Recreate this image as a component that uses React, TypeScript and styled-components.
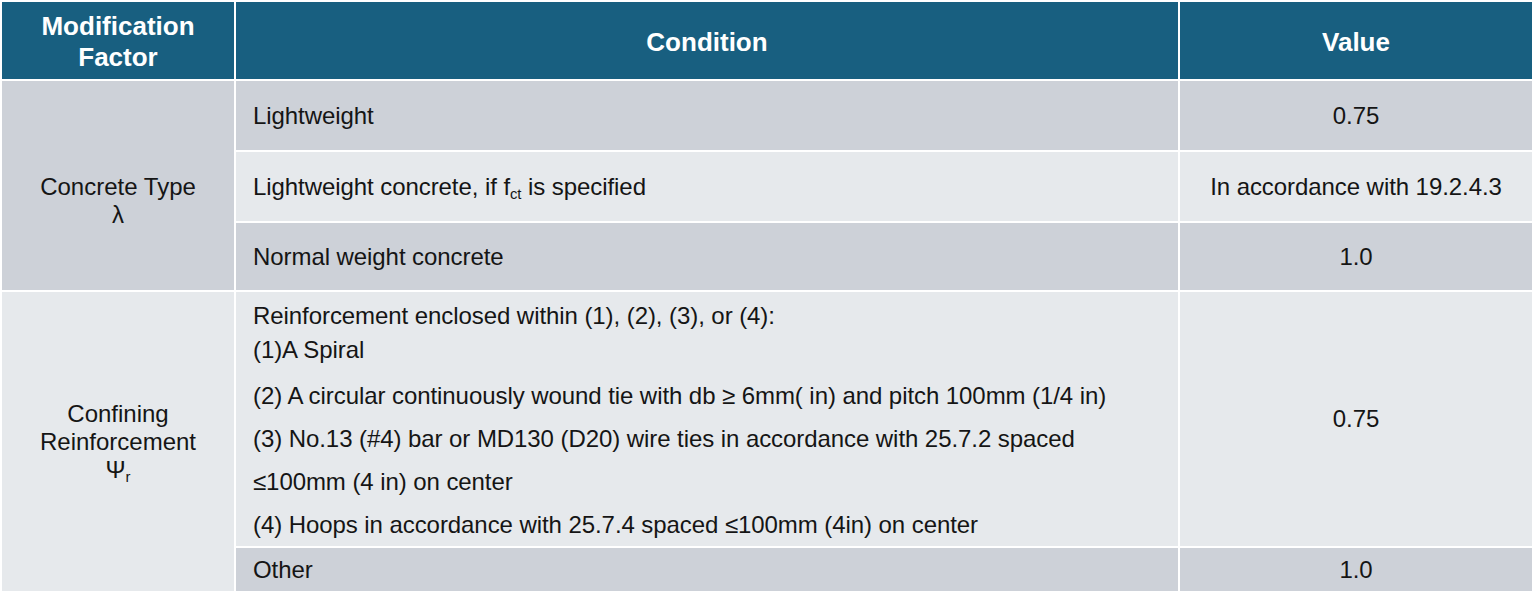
import type React from "react";
import { createGlobalStyle, styled } from "styled-components";

const GlobalStyle = createGlobalStyle`
  html, body {
    margin: 0;
    padding: 0;
    background: #ffffff;
  }
  body {
    font-family: "Liberation Sans", Arial, sans-serif;
  }
`;

const colors = {
  header: "#185f80",
  dark: "#cdd1d8",
  light: "#e6e9ec",
  text: "#151515",
};

type Shade = "dark" | "light";

const shadeColor = (shade: Shade) => (shade === "dark" ? colors.dark : colors.light);

const Table = styled.table`
  border-collapse: separate;
  border-spacing: 2px;
  width: 1534px;
  table-layout: fixed;
  font-family: "Liberation Sans", Arial, sans-serif;
  color: ${colors.text};
`;

const Column = styled.col<{ $width: number }>`
  width: ${(p) => p.$width}px;
`;

const HeadCell = styled.th`
  background-color: ${colors.header};
  color: #ffffff;
  font-size: 26px;
  font-weight: bold;
  line-height: 31px;
  height: 74px;
  padding: 3px 0 0 0;
  text-align: center;
  vertical-align: middle;
`;

const FactorCell = styled.td<{ $shade: Shade; $offset: number }>`
  background-color: ${(p) => shadeColor(p.$shade)};
  font-size: 24px;
  line-height: 28px;
  text-align: center;
  vertical-align: middle;
  padding: ${(p) => p.$offset}px 0 0 0;
`;

const ConditionCell = styled.td<{ $shade: Shade; $height: number }>`
  background-color: ${(p) => shadeColor(p.$shade)};
  height: ${(p) => p.$height}px;
  font-size: 24px;
  letter-spacing: -0.07px;
  padding: 0 0 0 17px;
  vertical-align: middle;
  text-align: left;
`;

const ValueCell = styled.td<{ $shade: Shade }>`
  background-color: ${(p) => shadeColor(p.$shade)};
  font-size: 24px;
  letter-spacing: -0.07px;
  padding: 0;
  text-align: center;
  vertical-align: middle;
`;

const ListBlock = styled.div`
  padding-top: 7px;
`;

const ListLine = styled.div<{ $tall?: boolean }>`
  line-height: ${(p) => (p.$tall ? 43 : 34)}px;
  white-space: nowrap;
`;

const TallGroup = styled.div`
  margin-top: 7px;
`;

const Sub = styled.sub`
  font-size: 0.62em;
  vertical-align: -0.3em;
  line-height: 0;
`;

const simpleRows: { label: React.ReactNode; value: string; shade: Shade; height: number }[] = [
  { label: "Lightweight", value: "0.75", shade: "dark", height: 69 },
  {
    label: (
      <>
        Lightweight concrete, if f<Sub>ct</Sub> is specified
      </>
    ),
    value: "In accordance with 19.2.4.3",
    shade: "light",
    height: 69,
  },
  { label: "Normal weight concrete", value: "1.0", shade: "dark", height: 67 },
];

export default function App() {
  return (
    <>
      <GlobalStyle />
      <Table>
        <colgroup>
          <Column $width={232} />
          <Column $width={942} />
          <Column $width={352} />
        </colgroup>
        <thead>
          <tr>
            <HeadCell>
              Modification
              <br />
              Factor
            </HeadCell>
            <HeadCell>Condition</HeadCell>
            <HeadCell>Value</HeadCell>
          </tr>
        </thead>
        <tbody>
          {simpleRows.map((row, i) => (
            <tr key={i}>
              {i === 0 && (
                <FactorCell rowSpan={3} $shade="dark" $offset={30}>
                  Concrete Type
                  <br />λ
                </FactorCell>
              )}
              <ConditionCell $shade={row.shade} $height={row.height}>
                {row.label}
              </ConditionCell>
              <ValueCell $shade={row.shade}>{row.value}</ValueCell>
            </tr>
          ))}
          <tr>
            <FactorCell rowSpan={2} $shade="light" $offset={0}>
              Confining
              <br />
              Reinforcement
              <br />Ψ<Sub>r</Sub>
            </FactorCell>
            <ConditionCell $shade="light" $height={254}>
              <ListBlock>
                <ListLine>Reinforcement enclosed within (1), (2), (3), or (4):</ListLine>
                <ListLine>(1)A Spiral</ListLine>
                <TallGroup>
                  <ListLine $tall>
                    (2) A circular continuously wound tie with db ≥ 6mm( in) and pitch 100mm (1/4 in)
                  </ListLine>
                  <ListLine $tall>
                    (3) No.13 (#4) bar or MD130 (D20) wire ties in accordance with 25.7.2 spaced
                  </ListLine>
                  <ListLine $tall>≤100mm (4 in) on center</ListLine>
                  <ListLine $tall>
                    (4) Hoops in accordance with 25.7.4 spaced ≤100mm (4in) on center
                  </ListLine>
                </TallGroup>
              </ListBlock>
            </ConditionCell>
            <ValueCell $shade="light">0.75</ValueCell>
          </tr>
          <tr>
            <ConditionCell $shade="dark" $height={43}>
              Other
            </ConditionCell>
            <ValueCell $shade="dark">1.0</ValueCell>
          </tr>
        </tbody>
      </Table>
    </>
  );
}
